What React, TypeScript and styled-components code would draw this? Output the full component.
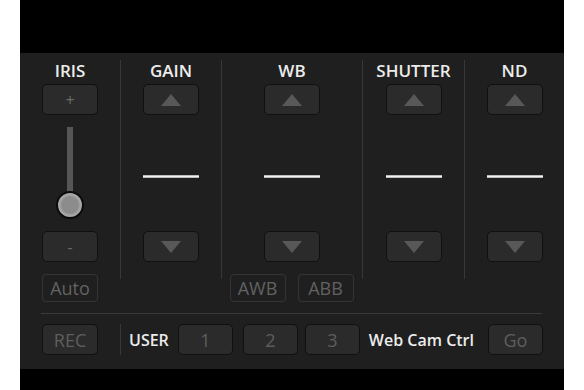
import React from "react";
import styled, { createGlobalStyle } from "styled-components";

const GlobalStyle = createGlobalStyle`
  html, body {
    margin: 0;
    padding: 0;
    background: #ffffff;
  }
  body {
    font-family: "Open Sans", "Liberation Sans", sans-serif;
  }
`;

// black frame around the control panel
const Frame = styled.div`
  width: 544px;
  margin-left: 20px;
  background: #000;
  padding: 53px 0 21px;
`;

const Panel = styled.div`
  height: 316px;
  box-sizing: border-box;
  background: #1f1f1f;
  padding-top: 7px;
  display: flex;
  flex-direction: column;
`;

const GRID = "100px 101px 141px 102px 100px";

const Columns = styled.div`
  display: grid;
  grid-template-columns: ${GRID};
  height: 219px;
`;

const Column = styled.div<{ $first?: boolean }>`
  display: flex;
  flex-direction: column;
  align-items: center;
  padding-top: 1px;
  border-left: ${(p) => (p.$first ? "none" : "1px solid #383838")};
`;

const Heading = styled.div`
  font-size: 17px;
  font-weight: 600;
  line-height: 20px;
  color: #ececec;
  margin-bottom: 3px;
  white-space: nowrap;
`;

const StepButton = styled.button`
  width: 56px;
  height: 31px;
  box-sizing: border-box;
  padding: 0;
  border: 1px solid #101010;
  border-radius: 5px;
  background: #2b2b2b;
  color: #6a6a6a;
  display: flex;
  align-items: center;
  justify-content: center;
  font-family: inherit;
  font-size: 16px;
  line-height: 1;
`;

const Middle = styled.div<{ $slider?: boolean }>`
  height: 116px;
  box-sizing: border-box;
  display: flex;
  flex-direction: column;
  align-items: center;
  justify-content: ${(p) => (p.$slider ? "flex-start" : "center")};
  padding-top: ${(p) => (p.$slider ? "12px" : "6px")};
`;

const Track = styled.div`
  width: 6px;
  height: 70px;
  background: #565656;
`;

const Knob = styled.div`
  width: 28px;
  height: 28px;
  margin-top: -6px;
  box-sizing: border-box;
  border-radius: 50%;
  border: 2px solid #0b0b0b;
  background: radial-gradient(circle, #8c8c8c 0 48%, #a6a6a6 60%);
`;

const ValueLine = styled.div`
  width: 56px;
  height: 3px;
  background: linear-gradient(#8a8a8a, #f2f2f2 35%, #f2f2f2 65%, #8a8a8a);
`;

const Extras = styled.div`
  display: grid;
  grid-template-columns: ${GRID};
  height: 28px;
  margin-top: -5px;
`;

const ExtraCell = styled.div`
  display: flex;
  justify-content: center;
  gap: 12px;
`;

const OutlineButton = styled.button`
  width: 56px;
  height: 28px;
  box-sizing: border-box;
  padding: 0;
  border: 1px solid #353535;
  border-radius: 4px;
  background: transparent;
  color: #626262;
  font-family: inherit;
  font-size: 18px;
  line-height: 1;
`;

const Separator = styled.div`
  height: 1px;
  margin: 11px 22px 0 21px;
  background: #3a3a3a;
`;

const BottomRow = styled.div`
  display: flex;
  align-items: center;
  height: 31px;
  margin-top: 10px;
  padding-left: 22px;
`;

const RowButton = styled(StepButton)<{ $w?: number }>`
  width: ${(p) => p.$w ?? 55}px;
  color: #5e5e5e;
  font-size: 18px;
`;

const RowDivider = styled.div`
  width: 1px;
  height: 31px;
  background: #383838;
  margin: 0 8px 0 22px;
`;

const Label = styled.span<{ $after?: number }>`
  font-size: 16px;
  font-weight: 600;
  color: #ececec;
  white-space: nowrap;
  margin-right: ${(p) => p.$after ?? 9}px;
`;

const Gap = styled.div<{ $w: number }>`
  width: ${(p) => p.$w}px;
  flex: none;
`;

function Up() {
  return (
    <svg width="20" height="12" viewBox="0 0 20 12">
      <polygon points="0,12 10,0 20,12" fill="#585858" />
    </svg>
  );
}

function Down() {
  return (
    <svg width="20" height="12" viewBox="0 0 20 12">
      <polygon points="0,0 20,0 10,12" fill="#585858" />
    </svg>
  );
}

const stepped = ["GAIN", "WB", "SHUTTER", "ND"];

export default function App() {
  return (
    <>
      <GlobalStyle />
      <Frame>
        <Panel>
          <Columns>
            <Column $first>
              <Heading>IRIS</Heading>
              <StepButton>+</StepButton>
              <Middle $slider>
                <Track />
                <Knob />
              </Middle>
              <StepButton>-</StepButton>
            </Column>
            {stepped.map((name) => (
              <Column key={name}>
                <Heading>{name}</Heading>
                <StepButton>
                  <Up />
                </StepButton>
                <Middle>
                  <ValueLine />
                </Middle>
                <StepButton>
                  <Down />
                </StepButton>
              </Column>
            ))}
          </Columns>
          <Extras>
            <ExtraCell>
              <OutlineButton>Auto</OutlineButton>
            </ExtraCell>
            <ExtraCell />
            <ExtraCell>
              <OutlineButton>AWB</OutlineButton>
              <OutlineButton>ABB</OutlineButton>
            </ExtraCell>
          </Extras>
          <Separator />
          <BottomRow>
            <RowButton $w={56}>REC</RowButton>
            <RowDivider />
            <Label>USER</Label>
            <RowButton>1</RowButton>
            <Gap $w={10} />
            <RowButton>2</RowButton>
            <Gap $w={7} />
            <RowButton>3</RowButton>
            <Gap $w={9} />
            <Label $after={14}>Web Cam Ctrl</Label>
            <RowButton>Go</RowButton>
          </BottomRow>
        </Panel>
      </Frame>
    </>
  );
}
